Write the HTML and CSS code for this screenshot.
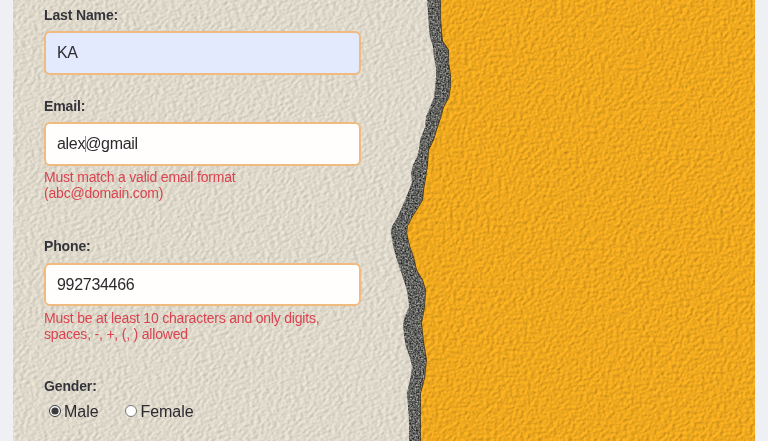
FILE: index.html
```html
<!DOCTYPE html>
<html lang="en">
<head>
<meta charset="utf-8">
<title>Registration form</title>
<link rel="stylesheet" href="styles.css">
</head>
<body>
<main class="panel">
  <svg class="backdrop" width="742" height="441" viewBox="13 0 742 441" aria-hidden="true">
    <defs>
      <filter id="paper" x="0" y="0" width="100%" height="100%" color-interpolation-filters="sRGB">
        <feTurbulence type="fractalNoise" baseFrequency="0.24 0.36" numOctaves="4" seed="7"/>
        <feDiffuseLighting surfaceScale="0.55" diffuseConstant="1.1" lighting-color="#e6e0d2">
          <feDistantLight azimuth="215" elevation="62"/>
        </feDiffuseLighting>
        <feGaussianBlur stdDeviation="0.55"/>
      </filter>
      <filter id="felt" x="0" y="0" width="100%" height="100%" color-interpolation-filters="sRGB">
        <feTurbulence type="fractalNoise" baseFrequency="0.27 0.3" numOctaves="4" seed="11"/>
        <feDiffuseLighting surfaceScale="0.7" diffuseConstant="1.12" lighting-color="#f2ab1f">
          <feDistantLight azimuth="215" elevation="62"/>
        </feDiffuseLighting>
        <feGaussianBlur stdDeviation="0.6"/>
      </filter>
      <filter id="grit" x="0" y="0" width="100%" height="100%" color-interpolation-filters="sRGB">
        <feTurbulence type="fractalNoise" baseFrequency="0.6" numOctaves="2" seed="3"/>
        <feColorMatrix type="matrix" values="0.9 0 0 0 -0.06  0.9 0 0 0 -0.06  0.9 0 0 0 -0.07  0 0 0 0 1"/>
        <feGaussianBlur stdDeviation="0.7"/>
      </filter>
      <filter id="soft" x="-5%" y="-5%" width="110%" height="110%">
        <feGaussianBlur stdDeviation="0.6"/>
      </filter>
      <clipPath id="torn-grey">
        <path d="M427 -2 L428 14 L429 30 L430 37 L433 47 L434 57 L436 68 L436 77 L435 88 L434 97 L430 107 L426 117 L425 127 L420 140 L419 149 L417 157 L413 165 L411 173 L412 182 L409 190 L403 205 L397 218 L392 226 L391 233 L393 246 L396 257 L401 272 L406 287 L408 297 L409 307 L405 316 L403 323 L404 336 L406 347 L410 358 L412 367 L410 380 L407 393 L408 407 L409 420 L409 443 L760 443 L760 -2 Z"/>
      </clipPath>
      <clipPath id="torn-orange">
        <path d="M441 -2 L441 18 L442 32 L443 41 L449 50 L449 62 L451 76 L451 87 L449 98 L444 107 L441 118 L437 130 L434 140 L429 150 L428 165 L426 178 L424 190 L423 200 L417 210 L412 218 L408 226 L407 233 L410 246 L414 257 L417 270 L423 280 L426 290 L425 307 L422 323 L424 342 L427 360 L425 378 L421 393 L421 415 L421 443 L760 443 L760 -2 Z"/>
      </clipPath>
    </defs>
    <g transform="rotate(-18 380 220)">
      <rect x="-120" y="-220" width="1000" height="880" filter="url(#paper)"/>
    </g>
    <g clip-path="url(#torn-grey)">
      <rect x="380" y="0" width="100" height="441" filter="url(#grit)"/>
    </g>
    <path class="tear-shadow" filter="url(#soft)" d="M441 -2 L441 18 L442 32 L443 41 L449 50 L449 62 L451 76 L451 87 L449 98 L444 107 L441 118 L437 130 L434 140 L429 150 L428 165 L426 178 L424 190 L423 200 L417 210 L412 218 L408 226 L407 233 L410 246 L414 257 L417 270 L423 280 L426 290 L425 307 L422 323 L424 342 L427 360 L425 378 L421 393 L421 415 L421 443"/>
    <g clip-path="url(#torn-orange)">
      <rect x="400" y="0" width="360" height="441" filter="url(#felt)"/>
    </g>
  </svg>

  <form class="form">
    <div class="field">
      <label class="label" for="last">Last Name:</label>
      <input class="input input-filled" id="last" type="text" value="KA">
    </div>
    <div class="field field-invalid">
      <label class="label" for="email">Email:</label>
      <div class="input-wrap">
        <input class="input" id="email" type="text" value="alex@gmail">
        <span class="caret"></span>
      </div>
      <p class="error">Must match a valid email format (abc@domain.com)</p>
    </div>
    <div class="field field-invalid field-phone">
      <label class="label" for="phone">Phone:</label>
      <input class="input" id="phone" type="text" value="992734466">
      <p class="error">Must be at least 10 characters and only digits, spaces, -, +, (, ) allowed</p>
    </div>
    <fieldset class="gender">
      <legend class="label">Gender:</legend>
      <div class="radios">
        <label class="radio"><input type="radio" name="gender" checked>Male</label>
        <label class="radio"><input type="radio" name="gender">Female</label>
      </div>
    </fieldset>
  </form>
</main>
</body>
</html>
```
FILE: styles.css
```css
* {
  box-sizing: border-box;
}

html,
body {
  height: 100%;
}

body {
  margin: 0;
  padding: 0 13px;
  overflow: hidden;
  background: #eff0f3;
  font-family: "Liberation Sans", Arial, sans-serif;
  color: #2b2b2f;
}

.panel {
  position: relative;
  width: 742px;
  height: 441px;
  overflow: hidden;
}

.backdrop {
  position: absolute;
  inset: 0;
  display: block;
}

.tear-shadow {
  fill: none;
  stroke: #4a3a18;
  stroke-width: 1.4;
}

.form {
  position: relative;
  width: 348px;
  padding: 7px 0 0 31px;
  filter: blur(0.3px);
}

.field {
  margin-bottom: 23px;
}

.field-invalid {
  margin-bottom: 37px;
}

.field-phone {
  margin-bottom: 36px;
}

.field-phone .label {
  margin-bottom: 9px;
}

.field-phone .input {
  height: 43px;
}

.field-phone .error {
  margin-top: 4px;
}

.label {
  display: block;
  padding: 0;
  margin: 0 0 8px;
  font-size: 14px;
  letter-spacing: -0.14px;
  line-height: 16px;
  font-weight: 700;
  color: #33333a;
}

.input-wrap {
  position: relative;
}

.input {
  display: block;
  width: 317px;
  height: 44px;
  padding: 0 11px;
  border: 2px solid #f0bb80;
  border-radius: 6px;
  background: #fffefc;
  font-family: inherit;
  font-size: 16px;
  letter-spacing: -0.3px;
  color: #2b2b2f;
  outline: none;
}

.input-filled {
  background: #e3eafd;
}

.caret {
  position: absolute;
  left: 41px;
  top: 14px;
  width: 1px;
  height: 16px;
  background: #8a8f98;
}

.error {
  margin: 3px 0 0;
  width: 290px;
  font-size: 14px;
  letter-spacing: -0.2px;
  line-height: 16px;
  color: #d9434f;
}

.gender {
  margin: 0;
  padding: 0;
  border: 0;
}

.radios {
  display: flex;
  gap: 27px;
  padding-left: 5px;
}

.radio {
  display: flex;
  align-items: center;
  font-size: 16px;
  letter-spacing: -0.05px;
  line-height: 20px;
  color: #2b2b2f;
}

.radio input {
  width: 12px;
  height: 12px;
  margin: 0 3px 2px 0;
  accent-color: #3a3a3a;
}
```
